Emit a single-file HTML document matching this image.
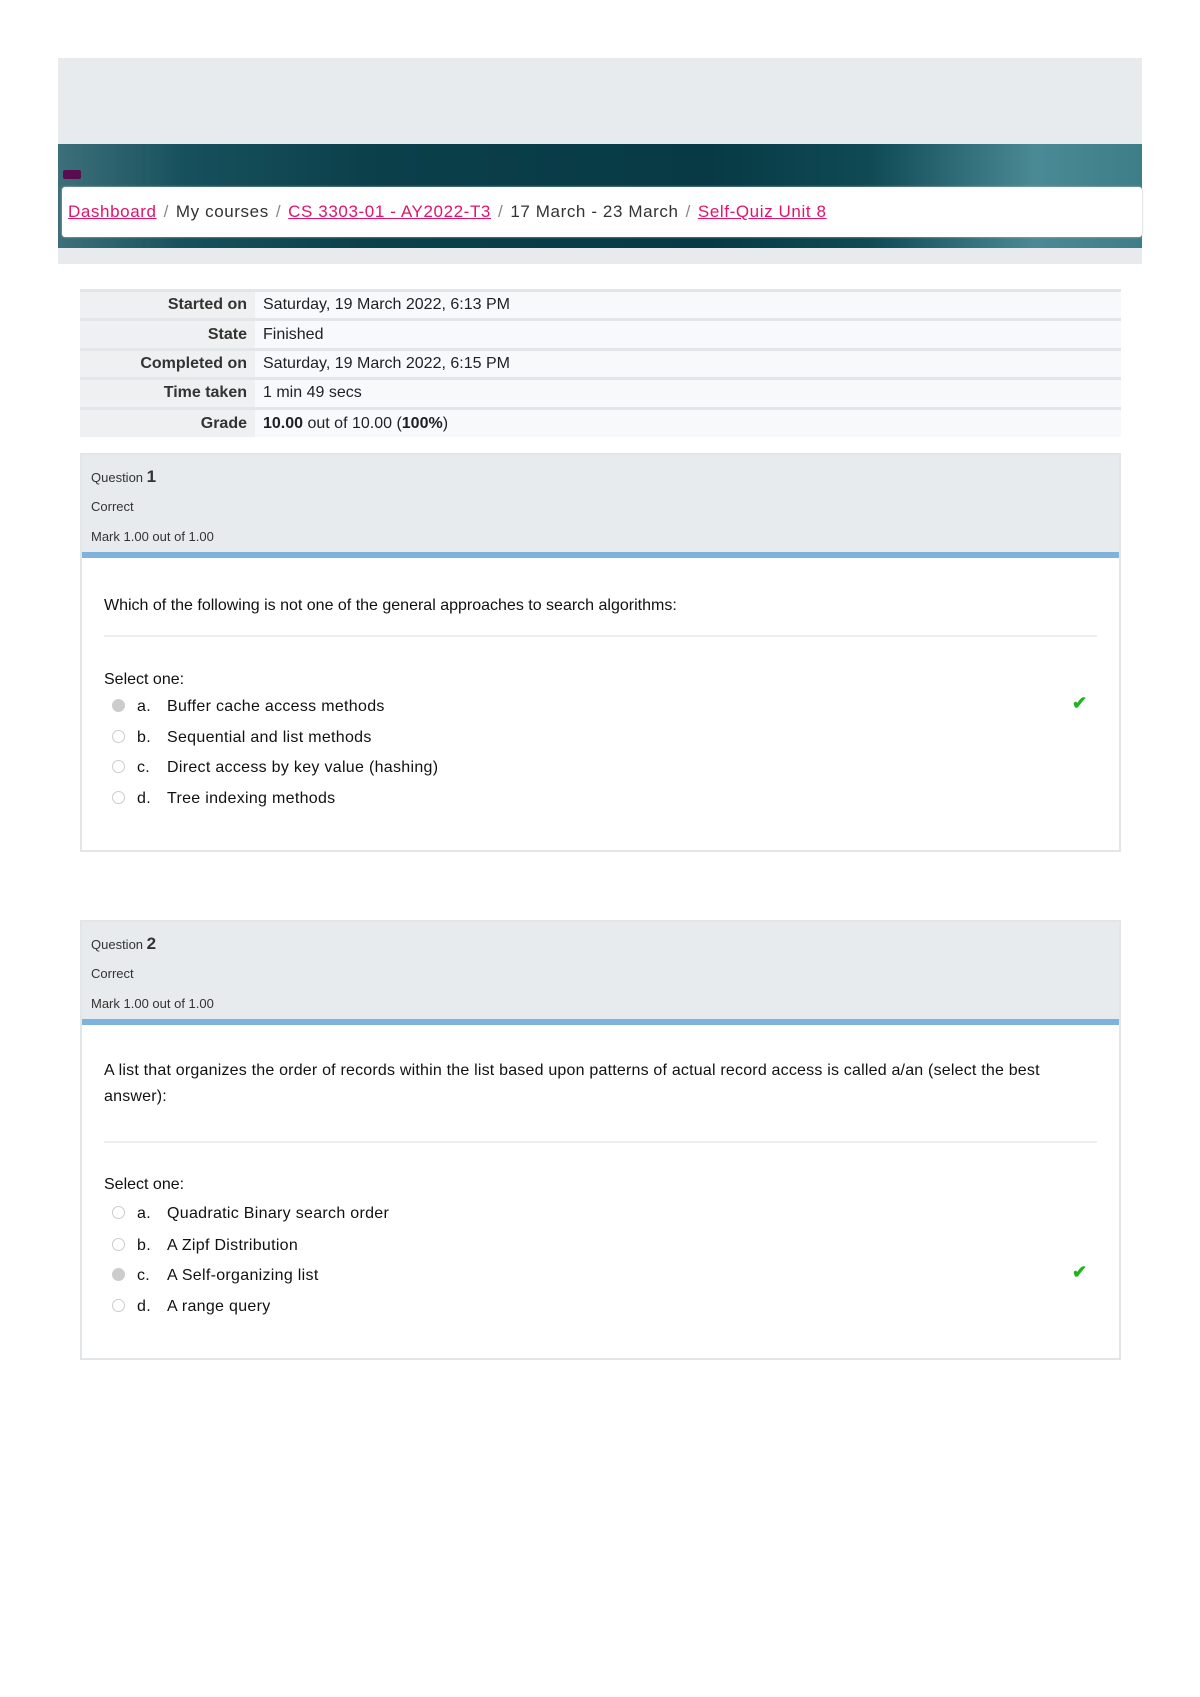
<!DOCTYPE html>
<html><head><meta charset="utf-8"><style>
*{box-sizing:border-box;margin:0;padding:0}
body{width:1200px;height:1697px;background:#fff;font-family:"Liberation Sans",sans-serif;color:#1d2125;position:relative;overflow:hidden}
.abs{position:absolute}
.hdr{left:58px;top:58px;width:1084px;height:206px;background:#e8ebee}
.banner{left:58px;top:144px;width:1084px;height:104px;background:linear-gradient(90deg,#3c6f7a 0%,#16505c 12%,#0b3f4a 30%,#073a45 60%,#0f4a55 75%,#4a8a95 90%,#3d7e88 100%)}
.bc{left:62px;top:187px;width:1080px;height:50px;background:#fff;border-radius:3px;box-shadow:0 0 2px #bbb;font-size:17px;letter-spacing:0.6px;line-height:50px;padding-left:6px;color:#333}
.bc a{color:#e4126b;text-decoration:underline}
.bc .s{color:#888;margin:0 7px}
table{position:absolute;left:80px;top:289px;width:1041px;border-collapse:collapse;font-size:16px}
td{height:29.4px;border-top:3px solid #e3e6e8;padding:0 8px;background:#f8f9fa}
td.l{width:175px;text-align:right;font-weight:bold;background:#eef0f1;color:#333}
.q{left:80px;width:1041px;border:2px solid #e3e6e8;background:#fff}
.qh{background:#e8ebee;height:103px;border-bottom:6px solid #7fb3dc;font-size:13px;color:#333;position:relative}
.qh div{position:absolute;left:9px}
.qh b{font-size:17px}
.qt{position:absolute;left:22px;font-size:16px;color:#111;line-height:26px}
.hr{position:absolute;left:22px;right:22px;height:2px;background:#eceef0}
.opt{position:absolute;left:30px;font-size:16px;color:#111;letter-spacing:0.3px}
.opt i{display:inline-block;width:13px;height:13px;border:1px solid #ccc;border-radius:50%;vertical-align:-1px;margin-right:12px;background:#fff}
.opt i.c{background:#ccc}
.opt span{display:inline-block;width:30px}
.ck{position:absolute;left:990px;color:#1fb31f;font-size:18px;font-weight:bold}
</style></head><body>
<div class="abs hdr"></div>
<div class="abs banner"></div>
<div class="abs" style="left:63px;top:170px;width:18px;height:9px;background:#5a0d4e;border-radius:2px"></div>
<div class="abs bc"><a>Dashboard</a><span class="s">/</span>My courses<span class="s">/</span><a>CS 3303-01 - AY2022-T3</a><span class="s">/</span>17 March - 23 March<span class="s">/</span><a>Self-Quiz Unit 8</a></div>
<table>
<tr><td class="l">Started on</td><td>Saturday, 19 March 2022, 6:13 PM</td></tr>
<tr><td class="l">State</td><td>Finished</td></tr>
<tr><td class="l">Completed on</td><td>Saturday, 19 March 2022, 6:15 PM</td></tr>
<tr><td class="l">Time taken</td><td>1 min 49 secs</td></tr>
<tr><td class="l">Grade</td><td><b>10.00</b> out of 10.00 (<b>100%</b>)</td></tr>
</table>

<div class="abs q" style="top:453px;height:399px">
<div class="qh"><div style="top:12px">Question <b>1</b></div><div style="top:44px">Correct</div><div style="top:74px">Mark 1.00 out of 1.00</div></div>
<div class="qt" style="top:138px">Which of the following is not one of the general approaches to search algorithms:</div>
<div class="hr" style="top:180px"></div>
<div class="qt" style="top:212px">Select one:</div>
<div class="opt" style="top:243px"><i class="c"></i><span>a.</span>Buffer cache access methods</div>
<div class="opt" style="top:274px"><i></i><span>b.</span>Sequential and list methods</div>
<div class="opt" style="top:304px"><i></i><span>c.</span>Direct access by key value (hashing)</div>
<div class="opt" style="top:335px"><i></i><span>d.</span>Tree indexing methods</div>
<div class="ck" style="top:238px">✔</div>
</div>

<div class="abs q" style="top:920px;height:440px">
<div class="qh"><div style="top:12px">Question <b>2</b></div><div style="top:44px">Correct</div><div style="top:74px">Mark 1.00 out of 1.00</div></div>
<div class="qt" style="top:136px;right:22px;letter-spacing:0.2px">A list that organizes the order of records within the list based upon patterns of actual record access is called a/an (select the best<br>answer):</div>
<div class="hr" style="top:219px"></div>
<div class="qt" style="top:250px">Select one:</div>
<div class="opt" style="top:283px"><i></i><span>a.</span>Quadratic Binary search order</div>
<div class="opt" style="top:315px"><i></i><span>b.</span>A Zipf Distribution</div>
<div class="opt" style="top:345px"><i class="c"></i><span>c.</span>A Self-organizing list</div>
<div class="opt" style="top:376px"><i></i><span>d.</span>A range query</div>
<div class="ck" style="top:340px">✔</div>
</div>
</body></html>
